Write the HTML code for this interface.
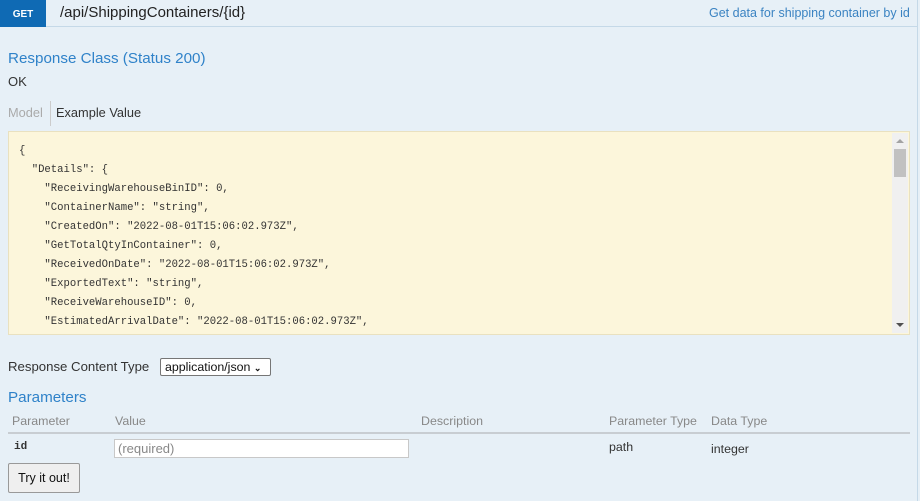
<!DOCTYPE html>
<html><head><style>
*{margin:0;padding:0;box-sizing:border-box}
body{width:920px;height:501px;overflow:hidden;background:#e7f0f7;font-family:"Liberation Sans",Arial,sans-serif;position:relative;color:#333}
.a{position:absolute;white-space:nowrap}
.rb{position:absolute;left:917px;top:0;width:1px;height:501px;background:#c5d9e8}
.hd{position:absolute;left:0;top:0;width:917px;height:27px;border-bottom:1px solid #c5d9e8}
.get{position:absolute;left:0;top:0;width:46px;height:27px;background:#0f6ab4;color:#fff;font-size:10px;font-weight:bold;text-align:center;line-height:29px}
.code{position:absolute;left:8px;top:131px;width:902px;height:204px;background:#fcf6db;border:1px solid #e9e1c0;overflow:hidden}
.code pre{font-family:"Liberation Mono",monospace;font-size:10.6px;line-height:19px;color:#333;position:absolute;left:10px;top:10px}
.sb{position:absolute;right:1px;top:1px;width:16px;height:200px;background:#f0f0f0}
.th{position:absolute;left:2px;top:16px;width:12px;height:28px;background:#c1c1c1}
.g{color:#888;font-size:12.4px}
</style></head><body>
<div class="hd"></div>
<div class="get">GET</div>
<div class="a" style="left:60px;top:4px;font-size:15px;color:#222">/api/ShippingContainers/{id}</div>
<div class="a" style="left:709px;top:6px;font-size:12.5px;color:#3b83c2">Get data for shipping container by id</div>
<div class="rb"></div>
<div class="a" style="left:8px;top:50px;font-size:15.2px;color:#2f82c9">Response Class (Status 200)</div>
<div class="a" style="left:8px;top:74px;font-size:13px">OK</div>
<div class="a" style="left:8px;top:105px;font-size:12.8px;color:#aaa">Model</div>
<div style="position:absolute;left:50px;top:101px;width:1px;height:25px;background:#ccc"></div>
<div class="a" style="left:56px;top:105px;font-size:12.8px;color:#333">Example Value</div>
<div class="code"><pre>{
  "Details": {
    "ReceivingWarehouseBinID": 0,
    "ContainerName": "string",
    "CreatedOn": "2022-08-01T15:06:02.973Z",
    "GetTotalQtyInContainer": 0,
    "ReceivedOnDate": "2022-08-01T15:06:02.973Z",
    "ExportedText": "string",
    "ReceiveWarehouseID": 0,
    "EstimatedArrivalDate": "2022-08-01T15:06:02.973Z",</pre>
<div class="sb"><div class="th"></div>
<div style="position:absolute;left:4px;top:6px;border-left:4px solid transparent;border-right:4px solid transparent;border-bottom:4px solid #a3a3a3"></div>
<div style="position:absolute;left:4px;top:190px;border-left:4px solid transparent;border-right:4px solid transparent;border-top:4px solid #505050"></div>
</div></div>
<div class="a" style="left:8px;top:359px;font-size:13.2px">Response Content Type</div>
<div class="a" style="left:160px;top:358px;width:111px;height:18px;background:#fff;border:1px solid #767676;border-radius:2px;font-size:12.4px;padding:1px 0 0 4px;color:#111">application/json <span style="font-size:9px;font-weight:bold">&#8964;</span></div>
<div class="a" style="left:8px;top:389px;font-size:15.2px;color:#2f82c9">Parameters</div>
<div class="a g" style="left:12px;top:414px">Parameter</div>
<div class="a g" style="left:115px;top:414px">Value</div>
<div class="a g" style="left:421px;top:414px">Description</div>
<div class="a g" style="left:609px;top:414px">Parameter Type</div>
<div class="a g" style="left:711px;top:414px">Data Type</div>
<div style="position:absolute;left:8px;top:432px;width:902px;height:2px;background:#c8cdd2"></div>
<div class="a" style="left:14px;top:441px;font-family:'Liberation Mono',monospace;font-weight:bold;font-size:11px">id</div>
<div class="a" style="left:114px;top:439px;width:295px;height:19px;background:#fff;border:1px solid #c8c8c8;font-size:13px;color:#888;padding:1px 0 0 3px">(required)</div>
<div class="a" style="left:609px;top:440px;font-size:12.4px">path</div>
<div class="a" style="left:711px;top:442px;font-size:12.4px">integer</div>
<div class="a" style="left:8px;top:463px;width:72px;height:30px;background:#efefef;border:1px solid #999;border-radius:2px;font-size:12.5px;text-align:center;line-height:28px;color:#111">Try it out!</div>
</body></html>
